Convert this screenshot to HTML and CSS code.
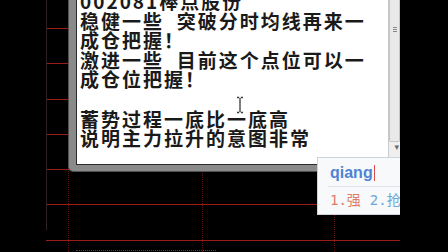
FILE: index.html
```html
<!DOCTYPE html>
<html lang="zh">
<head>
<meta charset="utf-8">
<link rel="stylesheet" href="styles.css">
</head>
<body>
<div class="screen">
  <div class="chart">
    <div class="axis"></div>
    <div class="rows">
      <div class="row"></div>
      <div class="row"></div>
      <div class="row"></div>
      <div class="row"></div>
      <div class="row"></div>
      <div class="row"></div>
      <div class="row last"></div>
    </div>
    <div class="vdot v1"></div>
    <div class="vdot v2"></div>
    <div class="vdot v3"></div>
    <div class="foot"></div>
  </div>

  <div class="window">
    <div class="text">
      <p>002081棒点股份</p>
      <p>稳健一些&nbsp;&nbsp;突破分时均线再来一</p>
      <p>成仓把握！</p>
      <p>激进一些&nbsp;&nbsp;目前这个点位可以一</p>
      <p>成仓位把握！</p>
      <p>&nbsp;</p>
      <p>蓄势过程一底比一底高</p>
      <p>说明主力拉升的意图非常</p>
    </div>
    <div class="scrollbar">
      <div class="thumb"><span class="grip"></span></div>
      <div class="arrow">▾</div>
    </div>
  </div>

  <svg class="ibeam" width="8" height="18" viewBox="0 0 8 18">
    <path d="M1 1.5h2.2M4.8 1.5H7M4 2v14M1 16.5h2.2M4.8 16.5H7" stroke="#3a3a3a" stroke-width="1.3" fill="none"/>
  </svg>

  <div class="ime">
    <div class="comp">qiang<span class="caret"></span></div>
    <div class="cands"><span class="c1">1.强</span><span class="c2">2.抢</span></div>
  </div>
</div>
</body>
</html>
```
FILE: styles.css
```css
html, body {
  margin: 0;
  padding: 0;
  background: #000;
}
.screen {
  position: relative;
  width: 448px;
  height: 252px;
  overflow: hidden;
  background: #000;
}
.chart {
  position: absolute;
  left: 46px;
  top: 0;
  width: 354px;
  height: 252px;
}
.axis {
  position: absolute;
  left: 0;
  top: 0;
  width: 1px;
  height: 230px;
  background: #2c2222;
}
.rows {
  display: flex;
  flex-direction: column;
  padding-top: 28px;
}
.row {
  height: 35.3px;
  box-sizing: border-box;
  border-top: 1px solid #9c1b1b;
}
.row.last { height: 4px; }
.vdot {
  position: absolute;
  top: 171px;
  bottom: 0;
  width: 0;
  border-left: 1px dotted #5e1212;
}
.v1 { left: 22px; }
.v2 { left: 156px; }
.v3 { left: 288px; }
.foot {
  position: absolute;
  left: 30px;
  top: 250px;
  width: 140px;
  border-top: 1px dotted #4a4a4a;
}
.window {
  position: absolute;
  left: 69px;
  top: -12px;
  width: 331px;
  height: 183px;
  box-sizing: border-box;
  display: flex;
  background: #fff;
  border-left: 7px solid #8a8a8a;
  border-bottom: 6px solid #8a8a8a;
  border-bottom-left-radius: 5px;
  box-shadow: inset 1px -1px 0 #2a2a2a, -1px 1px 0 #505050;
}
.text {
  flex: 1;
  padding: 3px 0 0 4px;
  font-family: "Noto Sans CJK SC", "Noto Sans", sans-serif;
  font-weight: 700;
  font-size: 19px;
  letter-spacing: 2px;
  line-height: 19.6px;
  color: #1a1a1a;
  white-space: nowrap;
  overflow: hidden;
}
.text p { margin: 0; }
.scrollbar {
  width: 11px;
  display: flex;
  flex-direction: column;
  background: #efefef;
  border-left: 1px solid #c9c9c9;
}
.thumb {
  height: 154px;
  box-sizing: border-box;
  background: #e9e9e9;
  border: 1px solid #c4c4c4;
  border-top: 0;
  border-radius: 0 0 2px 2px;
  display: flex;
  justify-content: center;
  padding-top: 39px;
}
.grip {
  width: 4px;
  height: 6px;
  background: repeating-linear-gradient(#8a8a8a 0 1px, transparent 1px 2px);
}
.arrow {
  font-family: "DejaVu Sans", sans-serif;
  font-size: 9px;
  color: #6a6a6a;
  text-align: right;
  line-height: 10px;
  padding-right: 1px;
}
.ibeam {
  position: absolute;
  left: 236px;
  top: 96px;
}
.ime {
  position: absolute;
  left: 317px;
  top: 157px;
  width: 83px;
  height: 58px;
  box-sizing: border-box;
  background: #f8f9fb;
  border: 1px solid #cdd3dc;
  border-right: 0;
  padding-left: 12px;
  overflow: hidden;
}
.comp {
  height: 27px;
  display: flex;
  align-items: center;
  padding-top: 1px;
  font-family: "Liberation Sans", sans-serif;
  font-weight: 700;
  font-size: 16px;
  color: #4d84d6;
  border-bottom: 1px solid #e1e5eb;
  margin-left: -2px;
  padding-left: 2px;
}
.caret {
  display: inline-block;
  width: 1px;
  height: 16px;
  margin-left: 1px;
  background: #e04a4a;
}
.cands {
  display: flex;
  gap: 9px;
  padding-top: 4px;
  font-size: 14px;
  line-height: 18px;
  white-space: nowrap;
}
.cands span { font-family: "DejaVu Sans Mono", "Noto Sans CJK SC", monospace; }
.c1 { color: #e07d6a; }
.c2 { color: #6fa6d8; }
```
